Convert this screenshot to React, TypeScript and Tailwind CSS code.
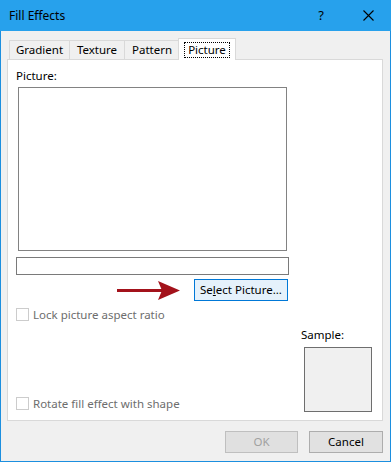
export default function App() {
  const font = { fontFamily: '"Noto Sans", "Liberation Sans", sans-serif' }

  return (
    <div
      className="w-[391px] h-[462px] flex flex-col border-l border-r border-b border-[#1c8fdf] bg-[#f0f0f0] text-[11.5px] text-black"
      style={font}
    >
      {/* title bar */}
      <div className="h-[31px] bg-[#27a1ec] flex items-center pl-[8px] pr-[17px] -mx-px">
        <span className="text-[12px] pl-px">Fill Effects</span>
        <span className="ml-auto text-[13px] mr-[39px]">?</span>
        <svg width="11" height="11" viewBox="0 0 11 11">
          <path d="M0.5 0.5 L10.5 10.5 M10.5 0.5 L0.5 10.5" stroke="#000" strokeWidth="1.1" />
        </svg>
      </div>

      <div className="flex-1 flex flex-col pl-[6px] pr-[7px] pt-[7px]">
        {/* tabs */}
        <div className="flex items-end pl-[2px] h-[21px]">
          <div className="w-[61px] h-[19px] border-t border-l border-r border-[#d9d9d9] flex items-center justify-center">
            Gradient
          </div>
          <div className="w-[56px] h-[19px] -ml-px border-t border-l border-r border-[#d9d9d9] flex items-center justify-center">
            Texture
          </div>
          <div className="w-[56px] h-[19px] -ml-px border-t border-l border-r border-[#d9d9d9] flex items-center justify-center">
            Pattern
          </div>
          <div className="relative z-10 w-[58px] h-[22px] -ml-[2px] -mb-px bg-white border-t border-l border-r border-[#d9d9d9] flex items-center justify-center">
            <span className="px-[3px] h-[16px] flex items-center border border-dotted border-black">
              Picture
            </span>
          </div>
        </div>

        {/* panel */}
        <div className="h-[362px] bg-white border border-[#d9d9d9] flex flex-col pl-[8px] pr-[10px] pt-[8px] pb-[8px]">
          <div className="h-[16px] leading-[16px]">Picture:</div>
          <div className="mt-[3px] ml-[2px] w-[269px] h-[164px] border border-[#828282]" />
          <div className="mt-[6px] w-[273px] h-[18px] border border-[#7a7a7a]" />
          <div className="mt-[4px] flex items-center">
            <svg width="63" height="19" viewBox="0 0 63 19" className="ml-[101px]">
              <rect x="0" y="8" width="45" height="3" fill="#a3121b" />
              <polygon points="41,0 63,9.5 41,19 45,9.5" fill="#a3121b" />
            </svg>
            <button className="ml-[14px] w-[94px] h-[22px] border border-[#0078d7] bg-[#e5f1fb] flex items-center justify-center">
              <span>
                Se<span className="underline">l</span>ect Picture...
              </span>
            </button>
          </div>
          <div className="mt-[5px] flex items-center text-[#6d6d6d]">
            <div className="w-[13px] h-[13px] border border-[#cccccc]" />
            <span className="ml-[4px]">Lock picture aspect ratio</span>
          </div>

          <div className="mt-auto flex items-end justify-between">
            <div className="flex items-center text-[#6d6d6d]">
              <div className="w-[13px] h-[13px] border border-[#cccccc]" />
              <span className="ml-[4px]">Rotate fill effect with shape</span>
            </div>
            <div className="flex flex-col">
              <div className="h-[16px] leading-[16px]">Sample:</div>
              <div className="mt-[4px] ml-[3px] w-[68px] h-[65px] border border-[#6e6e6e] bg-[#f0f0f0]" />
            </div>
          </div>
        </div>

        {/* buttons */}
        <div className="mt-[10px] flex justify-end gap-[11px]">
          <button className="w-[73px] h-[22px] border border-[#bfbfbf] bg-[#e0e0e0] text-[#a0a0a0] flex items-center justify-center">
            OK
          </button>
          <button className="w-[74px] h-[22px] border border-[#adadad] bg-[#e1e1e1] flex items-center justify-center">
            Cancel
          </button>
        </div>
      </div>
    </div>
  )
}
